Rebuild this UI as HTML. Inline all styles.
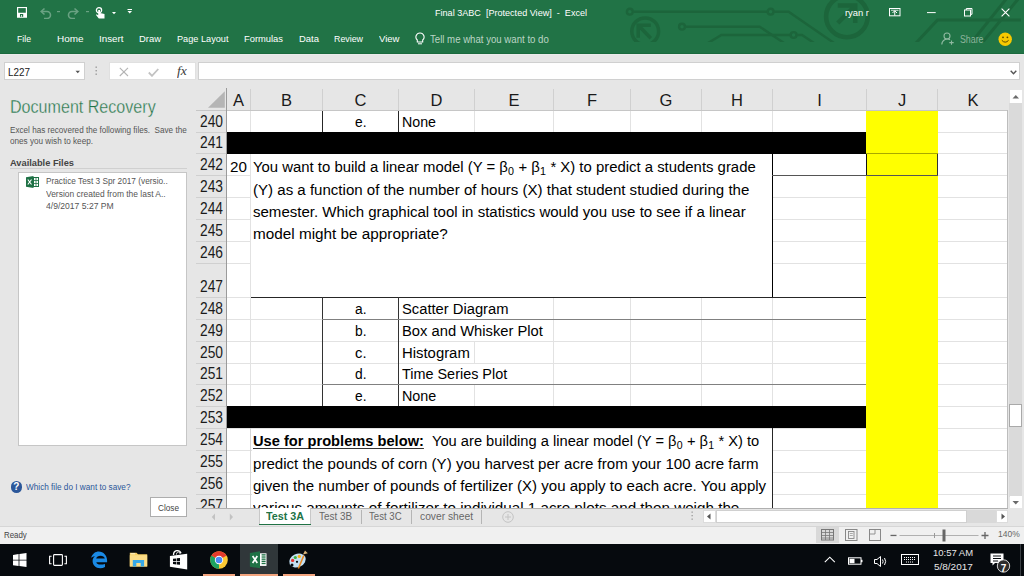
<!DOCTYPE html>
<html><head><meta charset="utf-8"><title>Excel</title><style>
html,body{margin:0;padding:0;width:1024px;height:576px;overflow:hidden;background:#fff;}
body{position:relative;font-family:"Liberation Sans", sans-serif;}
.r{position:absolute;}
.t{position:absolute;white-space:nowrap;line-height:1;transform-origin:0 0;}
.t span{display:inline-block;}
.sb{font-size:0.72em;position:relative;top:0.3em;margin:0 0.02em;}
u{text-decoration-thickness:1.2px;text-decoration-color:#333;text-underline-offset:2px;text-decoration-skip-ink:none;}
</style></head>
<body>
<div class="r" style="left:0px;top:0px;width:1024px;height:53px;background:#217346;"></div>
<div class="r" style="left:0px;top:53px;width:1024px;height:35px;background:#e6e6e6;"></div>
<div class="r" style="left:0px;top:53px;width:1024px;height:1px;background:#1b6a3e;"></div>
<div class="r" style="left:0px;top:54px;width:1024px;height:1px;background:#ebebeb;"></div>
<div class="r" style="left:4px;top:62px;width:81px;height:18px;background:#fff;box-sizing:border-box;border:1px solid #d0d0d0;"></div>
<div class="r" style="left:109px;top:62px;width:87px;height:18px;background:#fff;box-sizing:border-box;border:1px solid #e0e0e0;"></div>
<div class="r" style="left:198px;top:62px;width:822px;height:18px;background:#fff;box-sizing:border-box;border:1px solid #d0d0d0;"></div>
<div class="r" style="left:0px;top:88px;width:196px;height:438px;background:#e6e6e6;"></div>
<div class="r" style="left:18px;top:172px;width:169px;height:274px;background:#fff;box-sizing:border-box;border:1px solid #c6c6c6;"></div>
<div class="r" style="left:10px;top:168px;width:177px;height:1px;background:#d0d0d0;"></div>
<div class="r" style="left:150px;top:497px;width:37px;height:20px;background:#fff;box-sizing:border-box;border:1px solid #adadad;"></div>
<div class="r" style="left:10.5px;top:481.3px;width:11.5px;height:11.5px;background:#2b579a;border-radius:50%;"></div>
<div class="r" style="left:196px;top:88px;width:812px;height:420px;background:#fff;"></div>
<div class="r" style="left:196px;top:88px;width:812px;height:22px;background:#e6e6e6;"></div>
<div class="r" style="left:196px;top:88px;width:30px;height:420px;background:#e6e6e6;"></div>
<div class="r" style="left:866px;top:110px;width:72px;height:398px;background:#ffff00;"></div>
<div class="r" style="left:250px;top:110px;width:1px;height:398px;background:#e2e2e2;"></div>
<div class="r" style="left:322px;top:110px;width:1px;height:398px;background:#e2e2e2;"></div>
<div class="r" style="left:398px;top:110px;width:1px;height:398px;background:#e2e2e2;"></div>
<div class="r" style="left:474px;top:110px;width:1px;height:398px;background:#e2e2e2;"></div>
<div class="r" style="left:553px;top:110px;width:1px;height:398px;background:#e2e2e2;"></div>
<div class="r" style="left:630px;top:110px;width:1px;height:398px;background:#e2e2e2;"></div>
<div class="r" style="left:701px;top:110px;width:1px;height:398px;background:#e2e2e2;"></div>
<div class="r" style="left:772px;top:110px;width:1px;height:398px;background:#e2e2e2;"></div>
<div class="r" style="left:866px;top:110px;width:1px;height:398px;background:#e2e2e2;"></div>
<div class="r" style="left:937px;top:110px;width:1px;height:398px;background:#e2e2e2;"></div>
<div class="r" style="left:227px;top:132px;width:781px;height:1px;background:#e2e2e2;"></div>
<div class="r" style="left:227px;top:153px;width:781px;height:1px;background:#e2e2e2;"></div>
<div class="r" style="left:227px;top:175px;width:781px;height:1px;background:#e2e2e2;"></div>
<div class="r" style="left:227px;top:197px;width:781px;height:1px;background:#e2e2e2;"></div>
<div class="r" style="left:227px;top:219px;width:781px;height:1px;background:#e2e2e2;"></div>
<div class="r" style="left:227px;top:241px;width:781px;height:1px;background:#e2e2e2;"></div>
<div class="r" style="left:227px;top:263px;width:781px;height:1px;background:#e2e2e2;"></div>
<div class="r" style="left:227px;top:297px;width:781px;height:1px;background:#e2e2e2;"></div>
<div class="r" style="left:227px;top:319px;width:781px;height:1px;background:#e2e2e2;"></div>
<div class="r" style="left:227px;top:341px;width:781px;height:1px;background:#e2e2e2;"></div>
<div class="r" style="left:227px;top:363px;width:781px;height:1px;background:#e2e2e2;"></div>
<div class="r" style="left:227px;top:384px;width:781px;height:1px;background:#e2e2e2;"></div>
<div class="r" style="left:227px;top:406px;width:781px;height:1px;background:#e2e2e2;"></div>
<div class="r" style="left:227px;top:428px;width:781px;height:1px;background:#e2e2e2;"></div>
<div class="r" style="left:227px;top:450px;width:781px;height:1px;background:#e2e2e2;"></div>
<div class="r" style="left:227px;top:472px;width:781px;height:1px;background:#e2e2e2;"></div>
<div class="r" style="left:227px;top:494px;width:781px;height:1px;background:#e2e2e2;"></div>
<div class="r" style="left:251px;top:154px;width:521px;height:143px;background:#fff;"></div>
<div class="r" style="left:252px;top:429px;width:520px;height:79px;background:#fff;"></div>
<div class="r" style="left:474px;top:298px;width:1px;height:21px;background:#fff;"></div>
<div class="r" style="left:474px;top:320px;width:1px;height:21px;background:#fff;"></div>
<div class="r" style="left:474px;top:364px;width:1px;height:20px;background:#fff;"></div>
<div class="r" style="left:227px;top:132px;width:639px;height:22px;background:#000;"></div>
<div class="r" style="left:227px;top:406px;width:639px;height:22px;background:#000;"></div>
<div class="r" style="left:866px;top:110px;width:72px;height:22px;background:#ffff00;"></div>
<div class="r" style="left:866px;top:132px;width:72px;height:21px;background:#ffff00;"></div>
<div class="r" style="left:866px;top:154px;width:72px;height:354px;background:#ffff00;"></div>
<div class="r" style="left:322px;top:110px;width:1px;height:22px;background:#262626;"></div>
<div class="r" style="left:398px;top:110px;width:1px;height:22px;background:#262626;"></div>
<div class="r" style="left:772px;top:153px;width:1px;height:144px;background:#000;"></div>
<div class="r" style="left:772px;top:175px;width:95px;height:1px;background:#555;"></div>
<div class="r" style="left:866px;top:153px;width:1px;height:23px;background:#111;"></div>
<div class="r" style="left:937px;top:153px;width:1px;height:23px;background:#333;"></div>
<div class="r" style="left:866px;top:175px;width:72px;height:1px;background:#555;"></div>
<div class="r" style="left:866px;top:153px;width:72px;height:1px;background:#a8a800;"></div>
<div class="r" style="left:251px;top:297px;width:615px;height:1px;background:#262626;"></div>
<div class="r" style="left:322px;top:297px;width:1px;height:109px;background:#333;"></div>
<div class="r" style="left:398px;top:297px;width:1px;height:109px;background:#333;"></div>
<div class="r" style="left:322px;top:319px;width:544px;height:1px;background:#808080;"></div>
<div class="r" style="left:322px;top:384px;width:544px;height:1px;background:#808080;"></div>
<div class="r" style="left:250px;top:428px;width:1px;height:80px;background:#d6d6d6;"></div>
<div class="r" style="left:772px;top:428px;width:1px;height:80px;background:#262626;"></div>
<div class="r" style="left:196px;top:110px;width:812px;height:1px;background:#c6c6c6;"></div>
<div class="r" style="left:226px;top:88px;width:1px;height:420px;background:#9b9b9b;"></div>
<div class="r" style="left:250px;top:89px;width:1px;height:21px;background:#d0d0d0;"></div>
<div class="r" style="left:322px;top:89px;width:1px;height:21px;background:#d0d0d0;"></div>
<div class="r" style="left:398px;top:89px;width:1px;height:21px;background:#d0d0d0;"></div>
<div class="r" style="left:474px;top:89px;width:1px;height:21px;background:#d0d0d0;"></div>
<div class="r" style="left:553px;top:89px;width:1px;height:21px;background:#d0d0d0;"></div>
<div class="r" style="left:630px;top:89px;width:1px;height:21px;background:#d0d0d0;"></div>
<div class="r" style="left:701px;top:89px;width:1px;height:21px;background:#d0d0d0;"></div>
<div class="r" style="left:772px;top:89px;width:1px;height:21px;background:#d0d0d0;"></div>
<div class="r" style="left:866px;top:89px;width:1px;height:21px;background:#d0d0d0;"></div>
<div class="r" style="left:937px;top:89px;width:1px;height:21px;background:#d0d0d0;"></div>
<div class="r" style="left:196px;top:132px;width:30px;height:1px;background:#d0d0d0;"></div>
<div class="r" style="left:196px;top:153px;width:30px;height:1px;background:#d0d0d0;"></div>
<div class="r" style="left:196px;top:175px;width:30px;height:1px;background:#d0d0d0;"></div>
<div class="r" style="left:196px;top:197px;width:30px;height:1px;background:#d0d0d0;"></div>
<div class="r" style="left:196px;top:219px;width:30px;height:1px;background:#d0d0d0;"></div>
<div class="r" style="left:196px;top:241px;width:30px;height:1px;background:#d0d0d0;"></div>
<div class="r" style="left:196px;top:263px;width:30px;height:1px;background:#d0d0d0;"></div>
<div class="r" style="left:196px;top:297px;width:30px;height:1px;background:#d0d0d0;"></div>
<div class="r" style="left:196px;top:319px;width:30px;height:1px;background:#d0d0d0;"></div>
<div class="r" style="left:196px;top:341px;width:30px;height:1px;background:#d0d0d0;"></div>
<div class="r" style="left:196px;top:363px;width:30px;height:1px;background:#d0d0d0;"></div>
<div class="r" style="left:196px;top:384px;width:30px;height:1px;background:#d0d0d0;"></div>
<div class="r" style="left:196px;top:406px;width:30px;height:1px;background:#d0d0d0;"></div>
<div class="r" style="left:196px;top:428px;width:30px;height:1px;background:#d0d0d0;"></div>
<div class="r" style="left:196px;top:450px;width:30px;height:1px;background:#d0d0d0;"></div>
<div class="r" style="left:196px;top:472px;width:30px;height:1px;background:#d0d0d0;"></div>
<div class="r" style="left:196px;top:494px;width:30px;height:1px;background:#d0d0d0;"></div>
<svg class="r" style="left:196px;top:88px" width="30" height="22"><polygon points="12,19.7 28.8,19.7 28.8,3.3" fill="#b5b5b5"/></svg>
<div class="r" style="left:1008px;top:88px;width:16px;height:420px;background:#e6e6e6;"></div>
<div class="r" style="left:1007px;top:110px;width:1px;height:398px;background:#bdbdbd;"></div>
<div class="r" style="left:1009px;top:102.5px;width:12.7px;height:394px;background:#dadada;"></div>
<div class="r" style="left:1009.5px;top:90px;width:12.5px;height:12.5px;background:#fff;"></div>
<div class="r" style="left:1009px;top:404px;width:13px;height:23px;background:#fff;box-sizing:border-box;border:1px solid #a9a9a9;"></div>
<div class="r" style="left:1010px;top:496px;width:12px;height:12.5px;background:#fff;"></div>
<div class="r" style="left:196px;top:508px;width:828px;height:18px;background:#e6e6e6;"></div>
<div class="r" style="left:196px;top:508px;width:812px;height:1px;background:#b0b0b0;"></div>
<div class="r" style="left:259px;top:508px;width:52px;height:16.5px;background:#fff;box-sizing:border-box;border:1px solid #c8c8c8;border-top:none;"></div>
<div class="r" style="left:259px;top:523.5px;width:52px;height:1.5px;background:#217346;"></div>
<div class="r" style="left:361px;top:510px;width:1px;height:14px;background:#b5b5b5;"></div>
<div class="r" style="left:411px;top:510px;width:1px;height:14px;background:#b5b5b5;"></div>
<div class="r" style="left:481px;top:510px;width:1px;height:14px;background:#b5b5b5;"></div>
<div class="r" style="left:703px;top:510px;width:13px;height:13px;background:#fff;box-sizing:border-box;border:1px solid #dcdcdc;"></div>
<div class="r" style="left:716px;top:510px;width:251px;height:13px;background:#fff;box-sizing:border-box;border:1px solid #d0d0d0;"></div>
<div class="r" style="left:967px;top:510px;width:29px;height:13px;background:#d9d9d9;"></div>
<div class="r" style="left:996px;top:510px;width:12px;height:13px;background:#fff;box-sizing:border-box;border:1px solid #dcdcdc;"></div>
<div class="r" style="left:0px;top:526px;width:1024px;height:18px;background:#f0f0f0;"></div>
<div class="r" style="left:0px;top:526px;width:1024px;height:1px;background:#d6d6d6;"></div>
<div class="r" style="left:816px;top:527px;width:23px;height:16px;background:#d9d9d9;"></div>
<div class="r" style="left:0px;top:544px;width:1024px;height:32px;background:#060a0e;"></div>
<div class="r" style="left:239.5px;top:544px;width:38.5px;height:32px;background:#30373a;"></div>
<div class="r" style="left:203px;top:573.6px;width:32px;height:2.4px;background:#f3a57f;"></div>
<div class="r" style="left:239.7px;top:573.6px;width:38.3px;height:2.4px;background:#f3a57f;"></div>
<div class="r" style="left:283px;top:573.6px;width:31.7px;height:2.4px;background:#f3a57f;"></div>
<div class="r" style="left:1019.5px;top:544px;width:1px;height:32px;background:#3a3f44;"></div>
<svg class="r" style="left:600px;top:0px;" width="424" height="41.5" viewBox="0 0 424 41.5"><g stroke="#1c653b" fill="none">
<g stroke-width="2.4"><circle cx="29.8" cy="11.7" r="2.9"/><path d="M32.7 11.7 H167.7"/><circle cx="170.6" cy="11.7" r="2.9"/><path d="M173.5 11.7 H188.6 L234 43"/>
<circle cx="82" cy="26.7" r="2.9"/><path d="M84.9 26.7 H159.7 L184 43"/>
<path d="M108 43 L121.4 35 H190.7"/><circle cx="193.6" cy="35" r="2.9"/><path d="M196.5 35 H202 L214 43"/></g>
<circle cx="45.2" cy="31.3" r="13.4" stroke-width="3.5"/><path d="M38.2 25.2 H50.8 M38.2 23.5 V37.8 M38.2 25.2 L50.8 38.2" stroke-width="3.5"/>
<circle cx="246.9" cy="16.5" r="20.8" stroke-width="4.6"/><path d="M237.8 5.5 H257.3 M255.2 3.5 V23 M255.5 5.5 L237.8 23" stroke-width="4.5"/>
<g stroke-width="3"><path d="M316 43 L337.5 20 H421"/><path d="M371 43 L407 -2"/><path d="M382 43 L419 -2"/></g>
</g></svg>
<svg class="r" style="left:17px;top:7px;" width="10" height="11" viewBox="0 0 10 11"><rect x="0" y="0" width="10" height="10.75" fill="#fff"/><rect x="1.2" y="1.1" width="7.6" height="4.65" fill="#217346"/><rect x="3" y="7" width="3.2" height="2.8" fill="#217346"/><rect x="4" y="8" width="0.8" height="1.8" fill="#fff"/></svg>
<svg class="r" style="left:39px;top:7px;" width="13" height="12" viewBox="0 0 13 12"><path d="M3 4.5 H8 A3.5 3.5 0 0 1 8 11.5 H5" fill="none" stroke="#6aa283" stroke-width="1.6"/><path d="M5.5 1.5 L2.2 4.5 L5.5 7.5" fill="none" stroke="#6aa283" stroke-width="1.6"/></svg>
<svg class="r" style="left:57px;top:11px;" width="4" height="2" viewBox="0 0 4 2"><rect width="3" height="1.2" fill="#6aa283"/></svg>
<svg class="r" style="left:67px;top:7px;" width="13" height="12" viewBox="0 0 13 12"><path d="M10 4.5 H5 A3.5 3.5 0 0 0 5 11.5 H8" fill="none" stroke="#6aa283" stroke-width="1.6"/><path d="M7.5 1.5 L10.8 4.5 L7.5 7.5" fill="none" stroke="#6aa283" stroke-width="1.6"/></svg>
<svg class="r" style="left:86px;top:11px;" width="4" height="2" viewBox="0 0 4 2"><rect width="3" height="1.2" fill="#6aa283"/></svg>
<svg class="r" style="left:95px;top:7px;" width="10" height="12" viewBox="0 0 10 12"><circle cx="4" cy="3.3" r="2.6" fill="none" stroke="#fff" stroke-width="1.3"/><path d="M3.2 3 V8.2 L1.5 7.2 L1 8 L3.8 11.5 H9.5 V7 L5 6 V3 Z" fill="#fff"/></svg>
<svg class="r" style="left:111.5px;top:11.5px;" width="5" height="3" viewBox="0 0 5 3"><path d="M0 0 H4 L2 2.2 Z" fill="#fff"/></svg>
<svg class="r" style="left:127px;top:9px;" width="6" height="5" viewBox="0 0 6 5"><rect x="0.5" y="0" width="4.5" height="1" fill="#fff"/><path d="M0.5 2 H5 L2.75 4.5 Z" fill="#fff"/></svg>
<svg class="r" style="left:889px;top:8px;" width="12" height="9" viewBox="0 0 12 9"><rect x="0.5" y="0.5" width="10.5" height="7.3" fill="none" stroke="#fff" stroke-width="1"/><path d="M5.75 7.5 V3 M3.5 5 L5.75 2.7 L8 5" fill="none" stroke="#fff" stroke-width="1"/><rect x="2" y="1.8" width="7.5" height="0.8" fill="#fff"/></svg>
<svg class="r" style="left:927px;top:11.5px;" width="9" height="2" viewBox="0 0 9 2"><rect y="0.1" width="8.7" height="1" fill="#fff"/></svg>
<svg class="r" style="left:963.5px;top:8px;" width="9" height="9" viewBox="0 0 9 9"><rect x="0.5" y="2" width="6" height="6" fill="none" stroke="#fff" stroke-width="1"/><path d="M2.3 2 V0.5 H8 V6.3 H6.5" fill="none" stroke="#fff" stroke-width="1"/></svg>
<svg class="r" style="left:1000.5px;top:7.5px;" width="9" height="9" viewBox="0 0 9 9"><path d="M0.6 0.6 L8.4 8.4 M8.4 0.6 L0.6 8.4" stroke="#fff" stroke-width="1.1"/></svg>
<svg class="r" style="left:415px;top:32px;" width="10" height="13" viewBox="0 0 10 13"><path d="M5 1 A4 4 0 0 0 2.3 8 V10 H7.7 V8 A4 4 0 0 0 5 1 Z" fill="none" stroke="#fff" stroke-width="1.1"/><path d="M3 11.8 H7" stroke="#fff" stroke-width="1"/></svg>
<svg class="r" style="left:941px;top:32px;" width="14" height="13" viewBox="0 0 14 13"><circle cx="6" cy="4" r="3" fill="none" stroke="#8fb9a0" stroke-width="1.1"/><path d="M0.8 12.5 A5.5 5.5 0 0 1 9 7.8" fill="none" stroke="#8fb9a0" stroke-width="1.1"/><path d="M10.5 8.5 V12.8 M8.3 10.6 H12.7" stroke="#8fb9a0" stroke-width="1.1"/></svg>
<svg class="r" style="left:998px;top:32px;" width="15" height="15" viewBox="0 0 15 15"><circle cx="7.2" cy="7.2" r="6.7" fill="#f8c900"/><circle cx="5" cy="5.3" r="0.9" fill="#5a4a00"/><circle cx="9.4" cy="5.3" r="0.9" fill="#5a4a00"/><path d="M3.8 8.3 Q7.2 12 10.6 8.3" fill="none" stroke="#5a4a00" stroke-width="1"/></svg>
<svg class="r" style="left:75px;top:70px;" width="6" height="4" viewBox="0 0 6 4"><path d="M0.5 0.8 H5 L2.75 3.2 Z" fill="#555"/></svg>
<svg class="r" style="left:95px;top:66px;" width="3" height="10" viewBox="0 0 3 10"><rect x="0.5" y="0.5" width="1.4" height="1.4" fill="#9a9a9a"/><rect x="0.5" y="4" width="1.4" height="1.4" fill="#9a9a9a"/><rect x="0.5" y="7.5" width="1.4" height="1.4" fill="#9a9a9a"/></svg>
<svg class="r" style="left:118.5px;top:67px;" width="10" height="10" viewBox="0 0 10 10"><path d="M0.8 0.8 L9 9 M9 0.8 L0.8 9" stroke="#b4b4b4" stroke-width="1.1"/></svg>
<svg class="r" style="left:147.5px;top:67.5px;" width="11" height="9" viewBox="0 0 11 9"><path d="M0.8 4.5 L4 7.8 L10.3 1" fill="none" stroke="#c2c2c2" stroke-width="1.8"/></svg>
<svg class="r" style="left:1009.5px;top:69.5px;" width="7" height="5" viewBox="0 0 7 5"><path d="M0.7 0.8 L3.5 3.8 L6.3 0.8" fill="none" stroke="#555" stroke-width="1.4"/></svg>
<svg class="r" style="left:26px;top:176px;" width="13" height="12" viewBox="0 0 13 12"><path d="M0 1.2 L7.5 0 V12 L0 10.8 Z" fill="#1e7145"/><rect x="7.5" y="1.5" width="5" height="9" fill="none" stroke="#1e7145" stroke-width="1"/><path d="M7.5 4.5 H12.5 M7.5 7.5 H12.5 M10 1.5 V10.5" stroke="#1e7145" stroke-width="0.8"/><path d="M1.8 3.5 L5.5 8.5 M5.5 3.5 L1.8 8.5" stroke="#fff" stroke-width="1.1"/></svg>
<svg class="r" style="left:211px;top:513px;" width="5" height="8" viewBox="0 0 5 8"><path d="M4 0.5 L0.8 4 L4 7.5 Z" fill="#c2c2c2"/></svg>
<svg class="r" style="left:229px;top:513px;" width="5" height="8" viewBox="0 0 5 8"><path d="M0.8 0.5 L4 4 L0.8 7.5 Z" fill="#c2c2c2"/></svg>
<svg class="r" style="left:502px;top:511px;" width="12" height="12" viewBox="0 0 12 12"><circle cx="6" cy="6" r="5.3" fill="none" stroke="#c4c4c4" stroke-width="1"/><path d="M6 3 V9 M3 6 H9" stroke="#c4c4c4" stroke-width="1"/></svg>
<svg class="r" style="left:690.5px;top:511px;" width="3" height="10" viewBox="0 0 3 10"><rect x="0.5" y="0.5" width="1.3" height="1.3" fill="#9a9a9a"/><rect x="0.5" y="4" width="1.3" height="1.3" fill="#9a9a9a"/><rect x="0.5" y="7.5" width="1.3" height="1.3" fill="#9a9a9a"/></svg>
<svg class="r" style="left:706px;top:512.5px;" width="6" height="7" viewBox="0 0 6 7"><path d="M4.5 0.5 L1 3.5 L4.5 6.5 Z" fill="#555"/></svg>
<svg class="r" style="left:1000px;top:512.5px;" width="6" height="7" viewBox="0 0 6 7"><path d="M1.5 0.5 L5 3.5 L1.5 6.5 Z" fill="#555"/></svg>
<svg class="r" style="left:1012px;top:93.5px;" width="8" height="6" viewBox="0 0 8 6"><path d="M0.5 4.5 L3.8 1 L7 4.5 Z" fill="#6a6a6a"/></svg>
<svg class="r" style="left:1012px;top:499.5px;" width="8" height="6" viewBox="0 0 8 6"><path d="M0.5 1 L3.8 4.5 L7 1 Z" fill="#6a6a6a"/></svg>
<svg class="r" style="left:821px;top:529px;" width="14" height="12" viewBox="0 0 14 12"><rect x="0.5" y="0.5" width="12" height="10.5" fill="none" stroke="#777" stroke-width="1"/><path d="M0.5 3.5 H12.5 M0.5 6.5 H12.5 M0.5 9 H12.5 M4.5 0.5 V11 M8.5 0.5 V11" stroke="#777" stroke-width="0.8"/></svg>
<svg class="r" style="left:845px;top:529px;" width="13" height="12" viewBox="0 0 13 12"><rect x="0.5" y="0.5" width="11.5" height="11" fill="none" stroke="#888" stroke-width="1"/><rect x="3.5" y="2.5" width="5.5" height="7" fill="none" stroke="#888" stroke-width="0.9"/><path d="M4.8 4.5 H7.8 M4.8 6.5 H7.8" stroke="#999" stroke-width="0.8"/></svg>
<svg class="r" style="left:869px;top:529px;" width="12" height="12" viewBox="0 0 12 12"><rect x="0.5" y="0.5" width="11" height="11" fill="none" stroke="#888" stroke-width="1"/><path d="M6 0.5 V5 H0.5" fill="none" stroke="#888" stroke-width="0.9"/></svg>
<svg class="r" style="left:889px;top:528px;" width="104" height="15" viewBox="0 0 104 15"><rect x="1.5" y="6.8" width="6" height="1.3" fill="#666"/><rect x="10.5" y="7" width="79" height="1" fill="#b0b0b0"/><rect x="53.5" y="1.5" width="3" height="12" fill="#666"/><rect x="45" y="5" width="1" height="5" fill="#999"/><path d="M92.5 7.5 H99.5 M96 4 V11" stroke="#666" stroke-width="1.3"/></svg>
<svg class="r" style="left:12.5px;top:553px;" width="14" height="14" viewBox="0 0 14 14"><path d="M0 1.9 L5.6 1.1 V6.7 H0 Z M6.4 1 L13.5 0 V6.7 H6.4 Z M0 7.4 H5.6 V13 L0 12.2 Z M6.4 7.4 H13.5 V14 L6.4 13 Z" fill="#fff"/></svg>
<svg class="r" style="left:49px;top:554px;" width="18" height="12" viewBox="0 0 18 12"><rect x="4.6" y="0.6" width="8.8" height="10.8" rx="0.8" fill="none" stroke="#fff" stroke-width="1.1"/><path d="M2.6 2.3 H0.6 V9.7 H2.6 M15.4 2.3 H17.4 V9.7 H15.4" fill="none" stroke="#fff" stroke-width="1.1"/></svg>
<svg class="r" style="left:88px;top:549px;" width="22" height="22" viewBox="0 0 22 22"><path fill-rule="evenodd" d="M3.1 8.8 C4.5 4.5 7.5 2.5 10.7 2.5 C15.5 2.5 19.1 6.5 19.1 11.5 V13.2 H8.3 C8.8 15 10.5 15.6 12.3 15.6 C14 15.6 15.5 15.3 17 15 V18 C15.5 18.8 14 19.2 12.3 19.2 C7.5 19.2 4.6 16 4.6 12 C4.6 10 5.5 8.2 7 7 C5.5 7.3 4.2 8 3.1 8.8 Z M8.2 9.4 C8.7 7.6 10.3 6.7 12.5 6.7 C14.7 6.7 16.4 7.6 16.8 9.4 Z" fill="#1a8ae5"/></svg>
<svg class="r" style="left:129px;top:552px;" width="19" height="15" viewBox="0 0 19 15"><path d="M0.8 0.8 H7.5 L9 2.3 H18.2 V14.5 H0.8 Z" fill="#f5cd62"/><rect x="0.8" y="3.2" width="17.4" height="11.3" fill="#fbdc86"/><rect x="1.6" y="1.3" width="4.5" height="1" fill="#fff6d8"/><path d="M3.8 14.5 V8 H15.1 V14.5 H11.7 V11 H7.3 V14.5 Z" fill="#37a9e8"/></svg>
<svg class="r" style="left:164px;top:547px;" width="26" height="26" viewBox="0 0 26 26"><path d="M9.5 8 C9.5 3 15.5 2 17 6.3" fill="none" stroke="#fff" stroke-width="1.3"/><path d="M12.5 7.5 C12.5 4.5 15.5 4 16 6.8" fill="none" stroke="#fff" stroke-width="1"/><path d="M5.9 9 L23.2 6.8 V22.5 L5.9 19.8 Z" fill="#fff"/><path d="M9 11.8 L12.2 11.4 V14 H9 Z M12.8 11.3 L16 10.9 V14 H12.8 Z M9 14.8 H12.2 V17.4 L9 17 Z M12.8 14.8 H16 V17.8 L12.8 17.4 Z" fill="#060a0e"/></svg>
<svg class="r" style="left:209.5px;top:551px;" width="18" height="18" viewBox="0 0 18 18"><circle cx="9" cy="9" r="8.8" fill="#fcc934"/><path d="M9 9 L1.38 4.6 A8.8 8.8 0 0 0 9 17.8 Z" fill="#1ea362"/><path d="M9 9 L16.62 4.6 A8.8 8.8 0 0 0 1.38 4.6 Z" fill="#e33b2e"/><circle cx="9" cy="9" r="4.2" fill="#fff"/><circle cx="9" cy="9" r="3.3" fill="#4a8af4"/></svg>
<svg class="r" style="left:244px;top:547px;" width="26" height="26" viewBox="0 0 26 26"><path d="M5.9 5.9 L16 4.3 V21.2 L5.9 19.8 Z" fill="#1f7246"/><rect x="16" y="6.3" width="6.5" height="12.6" fill="#fff"/><rect x="17.6" y="7.20" width="4" height="1.35" fill="#1f7246"/><rect x="17.6" y="9.35" width="4" height="1.35" fill="#1f7246"/><rect x="17.6" y="11.50" width="4" height="1.35" fill="#1f7246"/><rect x="17.6" y="13.65" width="4" height="1.35" fill="#1f7246"/><rect x="17.6" y="15.80" width="4" height="1.35" fill="#1f7246"/><path d="M8.6 9 L13.3 16 M13.3 9 L8.6 16" stroke="#fff" stroke-width="1.7"/></svg>
<svg class="r" style="left:284px;top:546px;" width="26" height="26" viewBox="0 0 26 26"><ellipse cx="13.5" cy="14.5" rx="8.6" ry="6.6" transform="rotate(-25 13.5 14.5)" fill="#c4e0f3"/><circle cx="8.6" cy="14.4" r="1.6" fill="#e8322b"/><circle cx="11.3" cy="11.5" r="1.6" fill="#3cb043"/><circle cx="15.3" cy="10.4" r="1.6" fill="#f6b21b"/><circle cx="13" cy="15.8" r="1.1" fill="#060a0e"/><circle cx="8" cy="19" r="1.5" fill="#060a0e"/><path d="M14.4 22.5 L19.8 9.5" stroke="#ea8a24" stroke-width="1.6"/><path d="M19 8.5 L21 4.5 L23.8 7.3 Z" fill="#d9b47a"/></svg>
<svg class="r" style="left:824px;top:556px;" width="12" height="7" viewBox="0 0 12 7"><path d="M0.8 6.2 L5.8 1.2 L10.8 6.2" fill="none" stroke="#fff" stroke-width="1.1"/></svg>
<svg class="r" style="left:848px;top:557px;" width="15" height="8" viewBox="0 0 15 8"><rect x="0.5" y="0.8" width="12.5" height="6.4" fill="none" stroke="#fff" stroke-width="1"/><rect x="1.5" y="1.8" width="5" height="4.4" fill="#fff"/><rect x="13" y="2.8" width="1.5" height="2.4" fill="#fff"/></svg>
<svg class="r" style="left:874px;top:556px;" width="14" height="11" viewBox="0 0 14 11"><path d="M0.5 3.5 H3 L6.5 0.5 V10.5 L3 7.5 H0.5 Z" fill="none" stroke="#fff" stroke-width="1"/><path d="M8.5 3.5 Q9.8 5.5 8.5 7.5 M10.5 2 Q12.8 5.5 10.5 9" fill="none" stroke="#fff" stroke-width="1"/></svg>
<svg class="r" style="left:901px;top:554px;" width="18" height="11" viewBox="0 0 18 11"><rect x="0.5" y="0.5" width="17" height="10" fill="none" stroke="#fff" stroke-width="1"/><path d="M3 3.5 H15 M3 5.5 H15 M5 8 H13" stroke="#fff" stroke-width="1" stroke-dasharray="1 1"/></svg>
<svg class="r" style="left:989px;top:553px;" width="22" height="20" viewBox="0 0 22 20"><path d="M1.5 0.5 H14.5 V10 H6 L3.5 12.5 V10 H1.5 Z" fill="#fff"/><path d="M4 3 H12 M4 5.5 H12 M4 8 H9" stroke="#060a0e" stroke-width="1"/><circle cx="14.5" cy="13" r="6.2" fill="#2d2d2d" stroke="#fff" stroke-width="0.8"/></svg>
<div class="t" style="left:435.00px;top:8.16px;font-size:9.5px;font-weight:400;color:#fff;transform:scaleX(0.9543);"><span id="ttl">Final 3ABC&nbsp; [Protected View]&nbsp; -&nbsp; Excel</span></div>
<div class="t" style="left:845.00px;top:8.16px;font-size:9.5px;font-weight:400;color:#fff;transform:scaleX(0.9878);"><span id="usr">ryan r</span></div>
<div class="t" style="left:16.50px;top:33.66px;font-size:9.5px;font-weight:400;color:#fff;transform:scaleX(0.9143);"><span id="rt0">File</span></div>
<div class="t" style="left:57.00px;top:33.66px;font-size:9.5px;font-weight:400;color:#fff;transform:scaleX(1.0456);"><span id="rt1">Home</span></div>
<div class="t" style="left:99.00px;top:33.66px;font-size:9.5px;font-weight:400;color:#fff;transform:scaleX(1.0309);"><span id="rt2">Insert</span></div>
<div class="t" style="left:138.50px;top:33.66px;font-size:9.5px;font-weight:400;color:#fff;transform:scaleX(0.9922);"><span id="rt3">Draw</span></div>
<div class="t" style="left:176.50px;top:33.66px;font-size:9.5px;font-weight:400;color:#fff;transform:scaleX(0.9652);"><span id="rt4">Page Layout</span></div>
<div class="t" style="left:243.50px;top:33.66px;font-size:9.5px;font-weight:400;color:#fff;transform:scaleX(0.9850);"><span id="rt5">Formulas</span></div>
<div class="t" style="left:298.50px;top:33.66px;font-size:9.5px;font-weight:400;color:#fff;transform:scaleX(0.9961);"><span id="rt6">Data</span></div>
<div class="t" style="left:334.00px;top:33.66px;font-size:9.5px;font-weight:400;color:#fff;transform:scaleX(0.9308);"><span id="rt7">Review</span></div>
<div class="t" style="left:378.50px;top:33.66px;font-size:9.5px;font-weight:400;color:#fff;transform:scaleX(1.0038);"><span id="rt8">View</span></div>
<div class="t" style="left:429.50px;top:34.53px;font-size:10px;font-weight:400;color:#bcd5c5;transform:scaleX(0.9627);"><span id="tell">Tell me what you want to do</span></div>
<div class="t" style="left:959.50px;top:34.53px;font-size:10px;font-weight:400;color:#8db49c;transform:scaleX(0.8806);"><span id="share">Share</span></div>
<div class="t" style="left:8.00px;top:67.11px;font-size:10.5px;font-weight:400;color:#222;transform:scaleX(0.9418);"><span id="nbox">L227</span></div>
<div class="t" style="left:10.00px;top:98.06px;font-size:18px;font-weight:400;color:#217346;transform:scaleX(0.8934);-webkit-text-stroke:0.35px #e6e6e6;"><span id="drt">Document Recovery</span></div>
<div class="t" style="left:10.00px;top:125.80px;font-size:8.5px;font-weight:400;color:#555;transform:scaleX(0.9564);"><span id="dr1">Excel has recovered the following files.&nbsp; Save the</span></div>
<div class="t" style="left:10.00px;top:137.20px;font-size:8.5px;font-weight:400;color:#555;transform:scaleX(0.9597);"><span id="dr2">ones you wish to keep.</span></div>
<div class="t" style="left:10.00px;top:157.96px;font-size:9.5px;font-weight:700;color:#444;transform:scaleX(0.9748);"><span id="avf">Available Files</span></div>
<div class="t" style="left:46.30px;top:177.40px;font-size:8.5px;font-weight:400;color:#555;transform:scaleX(0.9732);"><span id="f1">Practice Test 3 Spr 2017 (versio..</span></div>
<div class="t" style="left:46.30px;top:189.60px;font-size:8.5px;font-weight:400;color:#555;transform:scaleX(0.9935);"><span id="f2">Version created from the last A..</span></div>
<div class="t" style="left:46.30px;top:201.60px;font-size:8.5px;font-weight:400;color:#555;transform:scaleX(1.0088);"><span id="f3">4/9/2017 5:27 PM</span></div>
<div class="t" style="left:26.00px;top:482.80px;font-size:8.5px;font-weight:400;color:#2b579a;transform:scaleX(0.9658);"><span id="help">Which file do I want to save?</span></div>
<div class="t" style="left:158.00px;top:503.68px;font-size:9px;font-weight:400;color:#444;transform:scaleX(0.9124);"><span id="close">Close</span></div>
<div class="t" style="left:3.60px;top:530.98px;font-size:9px;font-weight:400;color:#444;transform:scaleX(0.8764);"><span id="ready">Ready</span></div>
<div class="t" style="left:232.99px;top:92.23px;font-size:16.5px;font-weight:400;color:#1a1a1a;"><span id="chA">A</span></div>
<div class="t" style="left:280.99px;top:92.23px;font-size:16.5px;font-weight:400;color:#1a1a1a;"><span id="chB">B</span></div>
<div class="t" style="left:354.54px;top:92.23px;font-size:16.5px;font-weight:400;color:#1a1a1a;"><span id="chC">C</span></div>
<div class="t" style="left:430.54px;top:92.23px;font-size:16.5px;font-weight:400;color:#1a1a1a;"><span id="chD">D</span></div>
<div class="t" style="left:508.49px;top:92.23px;font-size:16.5px;font-weight:400;color:#1a1a1a;"><span id="chE">E</span></div>
<div class="t" style="left:586.95px;top:92.23px;font-size:16.5px;font-weight:400;color:#1a1a1a;"><span id="chF">F</span></div>
<div class="t" style="left:659.58px;top:92.23px;font-size:16.5px;font-weight:400;color:#1a1a1a;"><span id="chG">G</span></div>
<div class="t" style="left:731.04px;top:92.23px;font-size:16.5px;font-weight:400;color:#1a1a1a;"><span id="chH">H</span></div>
<div class="t" style="left:817.20px;top:92.23px;font-size:16.5px;font-weight:400;color:#1a1a1a;"><span id="chI">I</span></div>
<div class="t" style="left:897.88px;top:92.23px;font-size:16.5px;font-weight:400;color:#1a1a1a;"><span id="chJ">J</span></div>
<div class="t" style="left:967.49px;top:92.23px;font-size:16.5px;font-weight:400;color:#1a1a1a;"><span id="chK">K</span></div>
<div class="t" style="left:200.00px;top:112.63px;font-size:16.5px;font-weight:400;color:#1a1a1a;transform:scaleX(0.8354);"><span id="rn240">240</span></div>
<div class="t" style="left:200.00px;top:134.13px;font-size:16.5px;font-weight:400;color:#1a1a1a;transform:scaleX(0.8354);"><span id="rn241">241</span></div>
<div class="t" style="left:200.00px;top:156.13px;font-size:16.5px;font-weight:400;color:#1a1a1a;transform:scaleX(0.8354);"><span id="rn242">242</span></div>
<div class="t" style="left:200.00px;top:178.13px;font-size:16.5px;font-weight:400;color:#1a1a1a;transform:scaleX(0.8354);"><span id="rn243">243</span></div>
<div class="t" style="left:200.00px;top:200.13px;font-size:16.5px;font-weight:400;color:#1a1a1a;transform:scaleX(0.8354);"><span id="rn244">244</span></div>
<div class="t" style="left:200.00px;top:222.13px;font-size:16.5px;font-weight:400;color:#1a1a1a;transform:scaleX(0.8354);"><span id="rn245">245</span></div>
<div class="t" style="left:200.00px;top:244.13px;font-size:16.5px;font-weight:400;color:#1a1a1a;transform:scaleX(0.8354);"><span id="rn246">246</span></div>
<div class="t" style="left:200.00px;top:278.13px;font-size:16.5px;font-weight:400;color:#1a1a1a;transform:scaleX(0.8354);"><span id="rn247">247</span></div>
<div class="t" style="left:200.00px;top:300.13px;font-size:16.5px;font-weight:400;color:#1a1a1a;transform:scaleX(0.8354);"><span id="rn248">248</span></div>
<div class="t" style="left:200.00px;top:322.13px;font-size:16.5px;font-weight:400;color:#1a1a1a;transform:scaleX(0.8354);"><span id="rn249">249</span></div>
<div class="t" style="left:200.00px;top:344.13px;font-size:16.5px;font-weight:400;color:#1a1a1a;transform:scaleX(0.8354);"><span id="rn250">250</span></div>
<div class="t" style="left:200.00px;top:365.13px;font-size:16.5px;font-weight:400;color:#1a1a1a;transform:scaleX(0.8354);"><span id="rn251">251</span></div>
<div class="t" style="left:200.00px;top:387.13px;font-size:16.5px;font-weight:400;color:#1a1a1a;transform:scaleX(0.8354);"><span id="rn252">252</span></div>
<div class="t" style="left:200.00px;top:409.13px;font-size:16.5px;font-weight:400;color:#1a1a1a;transform:scaleX(0.8354);"><span id="rn253">253</span></div>
<div class="t" style="left:200.00px;top:431.13px;font-size:16.5px;font-weight:400;color:#1a1a1a;transform:scaleX(0.8354);"><span id="rn254">254</span></div>
<div class="t" style="left:200.00px;top:453.13px;font-size:16.5px;font-weight:400;color:#1a1a1a;transform:scaleX(0.8354);"><span id="rn255">255</span></div>
<div class="t" style="left:200.00px;top:475.13px;font-size:16.5px;font-weight:400;color:#1a1a1a;transform:scaleX(0.8354);"><span id="rn256">256</span></div>
<div class="r" style="left:196px;top:110px;width:812px;height:398px;overflow:hidden"><div class="r" style="left:-196px;top:-110px;width:1024px;height:576px"><div class="t" style="left:200.00px;top:497.13px;font-size:16.5px;font-weight:400;color:#1a1a1a;transform:scaleX(0.8354);"><span id="rn257">257</span></div></div></div>
<div class="t" style="left:354.75px;top:114.18px;font-size:15.5px;font-weight:400;color:#000;transform:scaleX(0.8889);"><span id="c240e">e.</span></div>
<div class="t" style="left:401.80px;top:114.18px;font-size:15.5px;font-weight:400;color:#000;transform:scaleX(0.9174);"><span id="c240n">None</span></div>
<div class="t" style="left:230.40px;top:158.68px;font-size:15.5px;font-weight:400;color:#000;transform:scaleX(0.9797);"><span id="a20">20</span></div>
<div class="t" style="left:252.70px;top:158.78px;font-size:15.5px;font-weight:400;color:#000;transform:scaleX(0.9609);"><span id="q1">You want to build a linear model (Y = β<span class="sb">0</span> + β<span class="sb">1</span> * X) to predict a students grade</span></div>
<div class="t" style="left:252.50px;top:181.98px;font-size:15.5px;font-weight:400;color:#000;transform:scaleX(0.9714);"><span id="q2">(Y) as a function of the number of hours (X) that student studied during the</span></div>
<div class="t" style="left:252.70px;top:203.88px;font-size:15.5px;font-weight:400;color:#000;transform:scaleX(0.9693);"><span id="q3">semester. Which graphical tool in statistics would you use to see if a linear</span></div>
<div class="t" style="left:252.70px;top:225.68px;font-size:15.5px;font-weight:400;color:#000;transform:scaleX(0.9867);"><span id="q4">model might be appropriate?</span></div>
<div class="t" style="left:354.75px;top:300.78px;font-size:15.5px;font-weight:400;color:#000;transform:scaleX(0.8889);"><span id="al0">a.</span></div>
<div class="t" style="left:401.70px;top:300.78px;font-size:15.5px;font-weight:400;color:#000;transform:scaleX(0.9510);"><span id="at0">Scatter Diagram</span></div>
<div class="t" style="left:354.75px;top:322.68px;font-size:15.5px;font-weight:400;color:#000;transform:scaleX(0.8889);"><span id="al1">b.</span></div>
<div class="t" style="left:401.70px;top:322.68px;font-size:15.5px;font-weight:400;color:#000;transform:scaleX(0.9508);"><span id="at1">Box and Whisker Plot</span></div>
<div class="t" style="left:354.75px;top:344.58px;font-size:15.5px;font-weight:400;color:#000;transform:scaleX(0.9534);"><span id="al2">c.</span></div>
<div class="t" style="left:401.70px;top:344.58px;font-size:15.5px;font-weight:400;color:#000;transform:scaleX(0.9598);"><span id="at2">Histogram</span></div>
<div class="t" style="left:354.75px;top:366.28px;font-size:15.5px;font-weight:400;color:#000;transform:scaleX(0.8889);"><span id="al3">d.</span></div>
<div class="t" style="left:401.70px;top:366.28px;font-size:15.5px;font-weight:400;color:#000;transform:scaleX(0.9299);"><span id="at3">Time Series Plot</span></div>
<div class="t" style="left:354.75px;top:388.18px;font-size:15.5px;font-weight:400;color:#000;transform:scaleX(0.8889);"><span id="al4">e.</span></div>
<div class="t" style="left:401.70px;top:388.18px;font-size:15.5px;font-weight:400;color:#000;transform:scaleX(0.9255);"><span id="at4">None</span></div>
<div class="t" style="left:252.70px;top:432.88px;font-size:15.5px;font-weight:400;color:#000;transform:scaleX(0.9449);"><span id="p1a"><b><u>Use for problems below:</u></b></span></div>
<div class="t" style="left:432.20px;top:432.88px;font-size:15.5px;font-weight:400;color:#000;transform:scaleX(0.9465);"><span id="p1b">You are building a linear model (Y = β<span class="sb">0</span> + β<span class="sb">1</span> * X) to</span></div>
<div class="t" style="left:252.70px;top:456.48px;font-size:15.5px;font-weight:400;color:#000;transform:scaleX(0.9731);"><span id="p2">predict the pounds of corn (Y) you harvest per acre from your 100 acre farm</span></div>
<div class="t" style="left:252.70px;top:478.28px;font-size:15.5px;font-weight:400;color:#000;transform:scaleX(0.9699);"><span id="p3">given the number of pounds of fertilizer (X) you apply to each acre. You apply</span></div>
<div class="r" style="left:196px;top:110px;width:812px;height:398px;overflow:hidden"><div class="r" style="left:-196px;top:-110px;width:1024px;height:576px"><div class="t" style="left:252.70px;top:500.38px;font-size:15.5px;font-weight:400;color:#000;transform:scaleX(0.9816);"><span id="p4">various amounts of fertilizer to individual 1 acre plots and then weigh the</span></div></div></div>
<div class="t" style="left:266.00px;top:511.11px;font-size:10.5px;font-weight:700;color:#217346;transform:scaleX(1.0227);"><span id="tab1">Test 3A</span></div>
<div class="t" style="left:319.00px;top:511.11px;font-size:10.5px;font-weight:400;color:#666;transform:scaleX(0.9420);"><span id="tab2">Test 3B</span></div>
<div class="t" style="left:369.40px;top:511.11px;font-size:10.5px;font-weight:400;color:#666;transform:scaleX(0.9155);"><span id="tab3">Test 3C</span></div>
<div class="t" style="left:420.00px;top:511.11px;font-size:10.5px;font-weight:400;color:#666;transform:scaleX(0.9764);"><span id="tab4">cover sheet</span></div>
<div class="t" style="left:998.00px;top:530.38px;font-size:9px;font-weight:400;color:#666;transform:scaleX(0.9422);"><span id="zoom">140%</span></div>
<div class="t" style="left:933.40px;top:548.36px;font-size:9.5px;font-weight:400;color:#e6e6e6;transform:scaleX(0.9990);"><span id="time">10:57 AM</span></div>
<div class="t" style="left:934.00px;top:561.96px;font-size:9.5px;font-weight:400;color:#e6e6e6;transform:scaleX(1.0491);"><span id="date">5/8/2017</span></div>
<div class="t" style="left:176.50px;top:64.37px;font-size:13.5px;font-weight:400;color:#3a3a3a;font-family:'Liberation Serif', serif;transform:scaleX(1.0051);"><span id="fx"><i>fx</i></span></div>
<div class="t" style="left:13.25px;top:482.04px;font-size:10px;font-weight:700;color:#fff;"><span id="helpq">?</span></div>
<div class="t" style="left:1000.72px;top:564.24px;font-size:10px;font-weight:700;color:#fff;"><span id="notif">7</span></div>
</body></html>
